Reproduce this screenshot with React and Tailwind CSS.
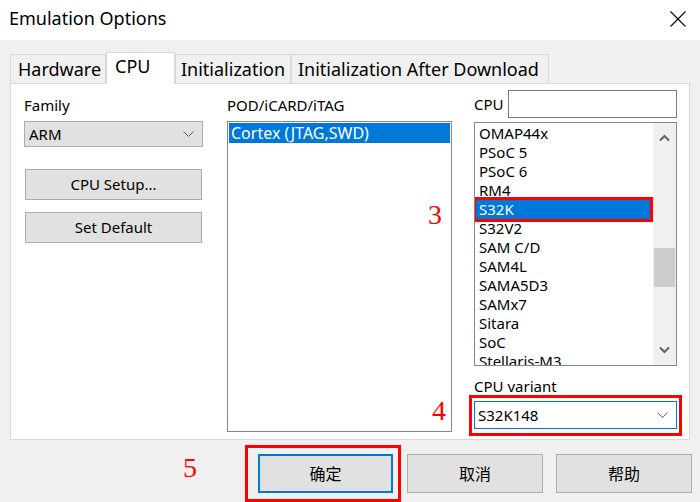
const cpus = ['OMAP44x', 'PSoC 5', 'PSoC 6', 'RM4', 'S32K', 'S32V2', 'SAM C/D', 'SAM4L', 'SAMA5D3', 'SAMx7', 'Sitara', 'SoC', 'Stellaris-M3'];

function Chevron({ className = '' }) {
  return (
    <svg width="11" height="6" viewBox="0 0 11 6" className={className}>
      <path d="M0.5 0.5 L5.5 5.5 L10.5 0.5" fill="none" stroke="#606060" strokeWidth="1" />
    </svg>
  );
}

function ScrollArrow({ up }) {
  return (
    <svg width="11" height="8" viewBox="0 0 11 8">
      <path
        d={up ? 'M1 6.5 L5.5 2 L10 6.5' : 'M1 1.5 L5.5 6 L10 1.5'}
        fill="none"
        stroke="#606060"
        strokeWidth="2"
      />
    </svg>
  );
}

function Tab({ label, active, className = '' }) {
  if (active) {
    return (
      <div className={`h-[32px] bg-white border border-b-0 border-[#d9d9d9] -mb-px relative z-10 text-[18px] leading-[26px] text-black ${className}`}>
        {label}
      </div>
    );
  }
  return (
    <div className={`h-[29px] bg-[#f0f0f0] border border-b-0 border-[#d9d9d9] text-[18px] leading-[28px] text-black ${className}`}>
      {label}
    </div>
  );
}

function Button({ label, focused, className = '' }) {
  return (
    <div
      className={`flex items-center justify-center bg-[#e1e1e1] text-black ${
        focused ? 'border-2 border-[#0078d7]' : 'border border-[#adadad]'
      } ${className}`}
    >
      {label}
    </div>
  );
}

const serif = { fontFamily: '"Liberation Serif", serif' };

export default function App() {
  return (
    <div
      className="w-[700px] h-[502px] bg-[#f0f0f0] flex flex-col overflow-hidden relative"
      style={{ fontFamily: '"Noto Sans", "Noto Sans CJK SC", sans-serif' }}
    >
      <div className="h-[40px] bg-white flex items-center justify-between pl-[9px] pr-[14px] shrink-0">
        <span className="text-[18px] text-black -mt-[4px]">Emulation Options</span>
        <svg width="16" height="16" viewBox="0 0 16 16" className="-mt-[3px]">
          <path d="M0.5 0.5 L15.5 15.5 M15.5 0.5 L0.5 15.5" stroke="#000" strokeWidth="1.1" />
        </svg>
      </div>

      <div className="pl-[10px] pt-[12px] flex items-end shrink-0">
        <Tab label="Hardware" className="w-[96px] pl-[7px]" />
        <Tab label="CPU" active className="w-[69px] pl-[8px]" />
        <Tab label="Initialization" className="w-[116px] pl-[5px]" />
        <Tab label="Initialization After Download" className="w-[258px] pl-[6px]" />
      </div>

      <div className="ml-[10px] w-[680px] h-[357px] shrink-0 bg-white border border-[#d9d9d9] flex pl-[13px] pt-[6px] text-[15px] text-black">
        <div className="w-[179px] flex flex-col">
          <div className="h-[20px] leading-[20px] mt-[5px] shrink-0">Family</div>
          <div className="mt-[6px] h-[26px] shrink-0 bg-[#e1e1e1] border border-[#adadad] flex items-center justify-between pl-[4px] pr-[8px]">
            <span>ARM</span>
            <Chevron />
          </div>
          <Button label="CPU Setup..." className="mt-[22px] h-[31px] mx-[1px] shrink-0" />
          <Button label="Set Default" className="mt-[12px] h-[31px] mx-[1px] shrink-0" />
        </div>

        <div className="ml-[24px] w-[225px] flex flex-col">
          <div className="h-[20px] leading-[20px] mt-[5px] shrink-0">POD/iCARD/iTAG</div>
          <div className="mt-[6px] h-[311px] shrink-0 border border-[#828790] p-[1px]">
            <div className="h-[20px] bg-[#0078d7] text-white text-[16px] leading-[20px] pl-[2px]">Cortex (JTAG,SWD)</div>
          </div>
        </div>

        <div className="ml-[22px] w-[203px] flex flex-col">
          <div className="flex items-center h-[28px] shrink-0">
            <span className="w-[34px]">CPU</span>
            <div className="flex-1 h-[28px] border border-[#7a7a7a] bg-white" />
          </div>
          <div className="mt-[4px] h-[244px] shrink-0 border border-[#828790] flex overflow-hidden">
            <div className="flex-1 flex flex-col pt-[1px] pl-[1px]">
              {cpus.map((c) => (
                <div
                  key={c}
                  className={`h-[19px] shrink-0 leading-[19px] pl-[3px] ${
                    c === 'S32K' ? 'bg-[#0078d7] text-white outline-[3px] outline-[#ff0000] mr-[3px]' : ''
                  }`}
                >
                  {c}
                </div>
              ))}
            </div>
            <div className="w-[23px] bg-[#f0f0f0] flex flex-col items-center">
              <div className="h-[30px] flex items-center justify-center">
                <ScrollArrow up />
              </div>
              <div className="mt-[95px] w-[21px] h-[39px] bg-[#cdcdcd]" />
              <div className="flex-1" />
              <div className="h-[30px] flex items-center justify-center">
                <ScrollArrow />
              </div>
            </div>
          </div>
          <div className="mt-[10px] h-[20px] leading-[20px] shrink-0">CPU variant</div>
          <div className="-mt-[1px] -mx-[5px] h-[41px] shrink-0 border-[3px] border-[#ff0000] pt-[3px] px-[2px]">
            <div className="h-[28px] border border-[#0078d7] bg-white flex items-center justify-between pl-[3px] pr-[8px]">
              <span>S32K148</span>
              <Chevron />
            </div>
          </div>
        </div>
      </div>

      <div className="flex pt-[5px] pl-[245px] text-[16px]">
        <div className="w-[156px] h-[57px] border-[3px] border-[#ff0000] pt-[6px] pl-[10px] pr-[5px]">
          <Button label="确定" focused className="w-[135px] h-[39px]" />
        </div>
        <Button label="取消" className="ml-[6px] mt-[9px] w-[136px] h-[39px]" />
        <Button label="帮助" className="ml-[13px] mt-[9px] w-[136px] h-[39px]" />
      </div>

      <span className="absolute left-[428px] top-[194px] text-[28px] text-[#ff0000]" style={serif}>3</span>
      <span className="absolute left-[432px] top-[390px] text-[28px] text-[#ff0000]" style={serif}>4</span>
      <span className="absolute left-[183px] top-[447px] text-[28px] text-[#ff0000]" style={serif}>5</span>
    </div>
  );
}
